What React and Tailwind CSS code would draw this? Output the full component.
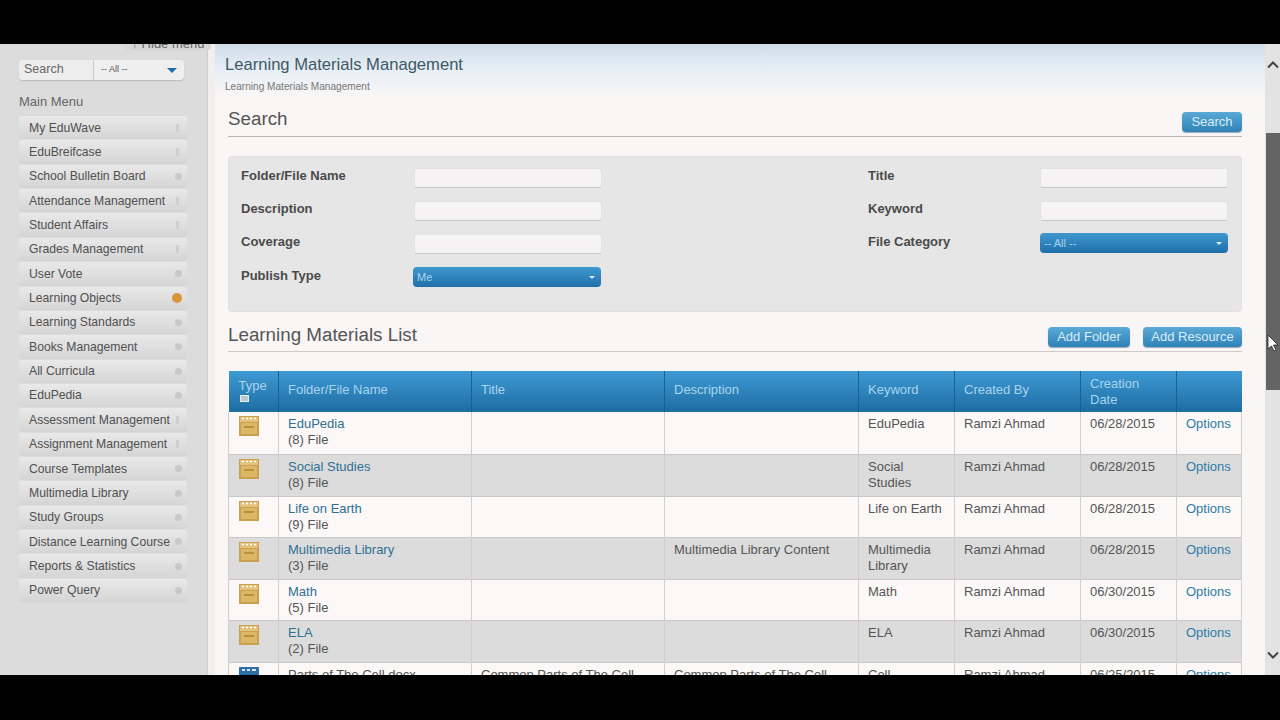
import React from "react";

const menu = [
  ["My EduWave", "a"], ["EduBreifcase", "a"], ["School Bulletin Board", "d"], ["Attendance Management", "a"],
  ["Student Affairs", "a"], ["Grades Management", "a"], ["User Vote", "d"], ["Learning Objects", "o"],
  ["Learning Standards", "d"], ["Books Management", "d"], ["All Curricula", "d"], ["EduPedia", "d"],
  ["Assessment Management", "a"], ["Assignment Management", "a"], ["Course Templates", "d"], ["Multimedia Library", "d"],
  ["Study Groups", "d"], ["Distance Learning Course", "d"], ["Reports & Statistics", "d"], ["Power Query", "d"],
];

const rows = [
  { n: "EduPedia", f: "(8) File", d: "", k: ["EduPedia"], dt: "06/28/2015", h: "h-[42px]", alt: false },
  { n: "Social Studies", f: "(8) File", d: "", k: ["Social", "Studies"], dt: "06/28/2015", h: "h-[42px]", alt: true },
  { n: "Life on Earth", f: "(9) File", d: "", k: ["Life on Earth"], dt: "06/28/2015", h: "h-[41px]", alt: false },
  { n: "Multimedia Library", f: "(3) File", d: "Multimedia Library Content", k: ["Multimedia", "Library"], dt: "06/28/2015", h: "h-[42px]", alt: true },
  { n: "Math", f: "(5) File", d: "", k: ["Math"], dt: "06/30/2015", h: "h-[41px]", alt: false },
  { n: "ELA", f: "(2) File", d: "", k: ["ELA"], dt: "06/30/2015", h: "h-[42px]", alt: true },
];

function Folder() {
  return (
    <svg width="20" height="20" viewBox="0 0 20 20" className="block">
      <rect x="0" y="0" width="20" height="20" fill="#c9a04e" />
      <rect x="1" y="1" width="18" height="5" fill="#e3c27e" />
      <path d="M3 2.500h2M7 2.500h2M11 2.500h2M15 2.500h2" stroke="#fff" strokeWidth="1.6" />
      <rect x="2" y="7" width="16" height="11" fill="#dcb866" />
      <rect x="5" y="10" width="10" height="2" fill="#b98f42" />
    </svg>
  );
}

function Docx() {
  return (
    <svg width="20" height="20" viewBox="0 0 20 20" className="block">
      <rect x="0" y="0" width="20" height="20" rx="1" fill="#2f6fa8" />
      <path d="M3 3h3M8 3h3M13 3h4" stroke="#d6e6f5" strokeWidth="2" />
    </svg>
  );
}

function Chevron({ down }) {
  return (
    <svg width="12" height="8" viewBox="0 0 12 8" className="block">
      <path d={down ? "M1 1.500l5 5 5-5" : "M1 6.500l5-5 5 5"} fill="none" stroke="#444" strokeWidth="2" />
    </svg>
  );
}

function Btn({ children, w }) {
  return (
    <div className={`${w} h-[20px] rounded-[4px] bg-gradient-to-b from-[#5aa9d6] to-[#2f82b7] text-[#d9ecf7] text-[13px] leading-[20px] text-center shadow-[0_1px_1px_#9ab]`}>
      {children}
    </div>
  );
}

function Input({ cls = "" }) {
  return <div className={`w-[188px] h-[20px] rounded-[3px] bg-gradient-to-b from-[#f7f5f5] to-[#f3f1f1] border border-[#e2e2e2] border-b-[#c9c9c9] ${cls}`} />;
}

function Sel({ label, cls = "" }) {
  return (
    <div className={`w-[188px] h-[20px] -mt-[1px] rounded-[4px] bg-gradient-to-b from-[#3f98cf] to-[#1f70a8] text-[#a9d4ee] text-[11px] leading-[20px] pl-1 pr-[6px] flex items-center justify-between ${cls}`}>
      <span>{label}</span>
      <span className="w-0 h-0 border-x-[3px] border-x-transparent border-t-[3px] border-t-[#dbeaf5]" />
    </div>
  );
}

function Label({ children, w }) {
  return <div className={`${w} text-[13px] font-bold text-[#4a4a4a] leading-[16px] -mt-[4px]`}>{children}</div>;
}

const cols = ["w-[50px]", "w-[193px]", "w-[193px]", "w-[194px]", "w-[96px]", "w-[126px]", "w-[96px]", "w-[65px]"];

export default function App() {
  return (
    <div className="w-[1280px] h-[720px] overflow-hidden bg-black flex flex-col font-['Liberation_Sans',Arial,sans-serif]">
      <div className="h-[44px] shrink-0 bg-black" />
      <div className="h-[631px] shrink-0 flex overflow-hidden">
        {/* Sidebar */}
        <aside className="w-[208px] shrink-0 bg-[#dcdcdc] relative pl-[19px] pt-[16px] border-r border-[#cfcfcf]">
          <div className="absolute left-[125px] -top-[6px] w-[86px] h-[12px] bg-[#d6d6d6] rounded-b-[3px] text-[13px] leading-[12px] text-[#666] overflow-hidden text-center whitespace-nowrap">
            ↑ Hide menu
          </div>
          <div className="w-[165px] h-[20px] flex rounded-[4px] bg-[#f0efef] shadow-[0_1px_1px_#bbb]">
            <div className="w-[75px] pl-[5px] text-[12.500px] leading-[18px] text-[#666] bg-[#eeeded] rounded-l-[4px] border-r border-[#ccc]">Search</div>
            <div className="flex-1 flex items-center justify-between pl-[7px] pr-[7px] text-[9px] text-[#555]">
              <span>-- All --</span>
              <span className="w-0 h-0 border-x-[5px] border-x-transparent border-t-[5px] border-t-[#1f6fb0]" />
            </div>
          </div>
          <div className="mt-[14px] text-[13px] leading-[16px] text-[#666]">Main Menu</div>
          <nav className="mt-[6px] flex flex-col gap-[1px]">
            {menu.map(([t, k]) => (
              <div key={t} className="w-[168px] h-[23.360px] flex items-center justify-between pl-[10px] pr-[5px] rounded-[2px] bg-gradient-to-b from-[#e9e9e9] to-[#d5d5d5] text-[12.200px] text-[#505050] whitespace-nowrap">
                <span>{t}</span>
                {k === "o" ? (
                  <span className="w-[10px] h-[10px] rounded-full bg-[#d9953a] shrink-0" />
                ) : k === "a" ? (
                  <span className="w-[3px] h-[8px] bg-[#cfcfcf] shrink-0 mr-[3px]" />
                ) : (
                  <span className="w-[7px] h-[7px] rounded-full bg-[#c9c9c9] shrink-0" />
                )}
              </div>
            ))}
          </nav>
        </aside>

        {/* Main */}
        <main className="flex-1 min-w-0 overflow-hidden bg-[#faf6f5] border-l-[7px] border-[#f1eeee]">
          <div className="h-[53px] pl-[10px] pt-[11px] bg-gradient-to-b from-[#cfdde6] via-[#e7eff6] to-[#faf6f5]">
            <div className="text-[16.600px] leading-[20px] text-[#3f5866]">Learning Materials Management</div>
            <div className="mt-[6px] text-[10.100px] leading-[12px] text-[#777]">Learning Materials Management</div>
          </div>
          <div className="pl-[13px] pr-[23px]">
            <div className="h-[41px] flex items-end justify-between border-b border-[#bdb8b6] pb-[4px] -mt-[1px]">
              <div className="text-[18.800px] leading-[30px] text-[#555] -mb-[2px]">Search</div>
              <Btn w="w-[60px]">Search</Btn>
            </div>
            <div className="mt-[19px] h-[156px] rounded-[4px] bg-[#e6e6e6] border border-[#e0e0e0] pl-[12px] pr-[13px] pt-[11px]">
              <div className="flex h-[33px]">
                <Label w="w-[173px] pt-[4px]">Folder/File Name</Label><Input />
                <div className="w-[266px]" /><Label w="w-[172px] pt-[4px]">Title</Label><Input />
              </div>
              <div className="flex h-[33px]">
                <Label w="w-[173px] pt-[4px]">Description</Label><Input />
                <div className="w-[266px]" /><Label w="w-[172px] pt-[4px]">Keyword</Label><Input />
              </div>
              <div className="flex h-[34px]">
                <Label w="w-[173px] pt-[4px]">Coverage</Label><Input />
                <div className="w-[266px]" /><Label w="w-[172px] pt-[4px]">File Category</Label><Sel label="-- All --" />
              </div>
              <div className="flex h-[33px]">
                <Label w="w-[173px] pt-[4px]">Publish Type</Label><Sel label="Me" cls="-ml-[1px]" />
              </div>
            </div>
            <div className="mt-[9px] h-[31px] flex items-end justify-between border-b border-[#cfcbc9] pb-[4px]">
              <div className="text-[18.800px] leading-[24px] text-[#555]">Learning Materials List</div>
              <div className="flex gap-[13px]">
                <Btn w="w-[82px]">Add Folder</Btn>
                <Btn w="w-[99px]">Add Resource</Btn>
              </div>
            </div>

            <table className="mt-[19px] w-[1013px] table-fixed border-collapse text-[13px] leading-[16px] text-[#555]">
              <colgroup>{cols.map((c, i) => <col key={i} className={c} />)}</colgroup>
              <thead>
                <tr className="h-[41px] bg-gradient-to-b from-[#3f9ad3] to-[#1c6da3] text-[#a9d4ee] text-left font-normal">
                  <th className="font-normal pl-[10px] border-r border-[#1f5f8c] align-middle pb-[4px]">
                    <div>Type</div>
                    <div className="w-[9px] h-[7px] bg-[#b9c9d3] border border-[#e5eef3] mt-[1px] ml-[1px]" />
                  </th>
                  {["Folder/File Name", "Title", "Description", "Keyword", "Created By"].map((h) => (
                    <th key={h} className="font-normal pl-[9px] pb-[3px] border-r border-[#1f5f8c]">{h}</th>
                  ))}
                  <th className="font-normal pl-[9px] border-r border-[#1f5f8c]">Creation<br />Date</th>
                  <th />
                </tr>
              </thead>
              <tbody>
                {rows.map((r) => (
                  <tr key={r.n} className={`${r.h} align-top border-b border-[#c8c8c8] ${r.alt ? "bg-[#dcdcdc]" : "bg-[#fbf8f7]"}`}>
                    <td className="border-x border-[#cfcfcf] pl-[10px] pt-[4px]"><Folder /></td>
                    <td className="border-r border-[#cfcfcf] pl-[9px] pt-[4px]">
                      <div className="text-[#2f6f93]">{r.n}</div>
                      <div>{r.f}</div>
                    </td>
                    <td className="border-r border-[#cfcfcf]" />
                    <td className="border-r border-[#cfcfcf] pl-[9px] pt-[4px]">{r.d}</td>
                    <td className="border-r border-[#cfcfcf] pl-[9px] pt-[4px]">
                      {r.k.map((x) => <div key={x}>{x}</div>)}
                    </td>
                    <td className="border-r border-[#cfcfcf] pl-[9px] pt-[4px]">Ramzi Ahmad</td>
                    <td className="border-r border-[#cfcfcf] pl-[9px] pt-[4px]">{r.dt}</td>
                    <td className="border-r border-[#cfcfcf] pl-[9px] pt-[4px] text-[#2f7ba8]">Options</td>
                  </tr>
                ))}
                <tr className="h-[42px] align-top bg-[#fbf8f7]">
                  <td className="border-x border-[#cfcfcf] pl-[10px] pt-[4px]"><Docx /></td>
                  <td className="border-r border-[#cfcfcf] pl-[9px] pt-[4px]">Parts of The Cell.docx</td>
                  <td className="border-r border-[#cfcfcf] pl-[9px] pt-[4px] whitespace-nowrap overflow-hidden">Common Parts of The Cell</td>
                  <td className="border-r border-[#cfcfcf] pl-[9px] pt-[4px] whitespace-nowrap overflow-hidden">Common Parts of The Cell</td>
                  <td className="border-r border-[#cfcfcf] pl-[9px] pt-[4px]">Cell</td>
                  <td className="border-r border-[#cfcfcf] pl-[9px] pt-[4px]">Ramzi Ahmad</td>
                  <td className="border-r border-[#cfcfcf] pl-[9px] pt-[4px]">06/25/2015</td>
                  <td className="border-r border-[#cfcfcf] pl-[9px] pt-[4px] text-[#2f7ba8]">Options</td>
                </tr>
              </tbody>
            </table>
          </div>
        </main>

        {/* Scrollbar */}
        <div className="w-[15px] shrink-0 bg-[#e3e3e3] relative flex flex-col items-center">
          <div className="h-[42px] pt-[17px] shrink-0"><Chevron /></div>
          <div className="mt-[47px] ml-[1px] w-[14px] h-[257px] shrink-0 bg-[#646464]" />
          <div className="mt-auto mb-[16px]"><Chevron down /></div>
          <svg width="12" height="18" viewBox="0 0 12 18" className="absolute left-[2px] top-[290px]">
            <path d="M1 1v14l3.500-3 2.500 5 2-1-2.500-5H11z" fill="#fff" stroke="#222" strokeWidth="0.8" />
          </svg>
        </div>
      </div>
      <div className="flex-1 bg-black" />
    </div>
  );
}
